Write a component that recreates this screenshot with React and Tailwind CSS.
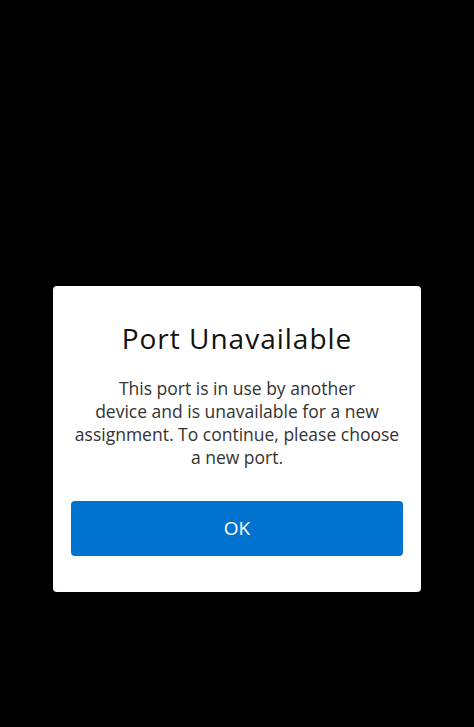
export default function App() {
  return (
    <div className="min-h-screen bg-black pt-[286px]" style={{ fontFamily: "'Open Sans', 'Noto Sans', sans-serif" }}>
      <div className="mx-auto flex h-[306px] w-[368px] flex-col rounded-[4px] bg-white px-[18px]">
        <h1 className="mt-[35px] text-center text-[28px] leading-[34px] font-normal tracking-[1px] text-[#111]">
          Port Unavailable
        </h1>
        <p className="mt-[22px] text-center text-[17.5px] leading-[23px] text-[#333]">
          This port is in use by another
          <br />
          device and is unavailable for a new
          <br />
          assignment. To continue, please choose
          <br />
          a new port.
        </p>
        <button className="mt-[32px] h-[55px] w-full rounded-[4px] bg-[#0072d0] text-[19px] text-white">
          OK
        </button>
      </div>
    </div>
  );
}
